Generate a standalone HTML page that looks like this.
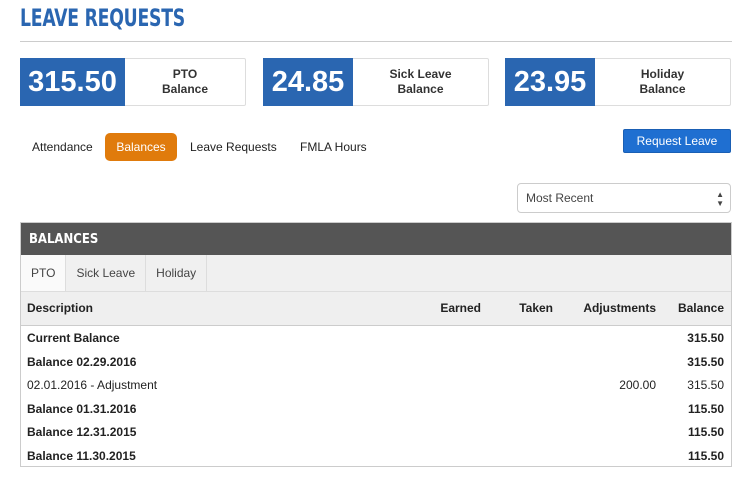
<!DOCTYPE html>
<html><head><style>
*{box-sizing:border-box;margin:0;padding:0}
body{width:742px;height:483px;background:#fff;font-family:"Liberation Sans",sans-serif;color:#222;position:relative;overflow:hidden}
.abs{position:absolute}
h1{position:absolute;left:20px;top:4px;font-family:"DejaVu Sans Condensed","Liberation Sans Narrow","Liberation Sans",sans-serif;font-weight:bold;font-size:24px;color:#2a66b1;letter-spacing:-0.3px;transform:scaleX(.8);transform-origin:left;white-space:nowrap}
.hr{left:20px;top:41px;width:712px;height:1px;background:#ccc}
.card{position:absolute;top:58px;height:48px;border:1px solid #ddd;border-radius:2px;display:flex;background:#fff}
.card .n{background:#2a66b1;color:#fff;font-size:29px;font-weight:bold;display:flex;align-items:center;justify-content:center;margin:-1px 0 0 -1px;height:48px}
.card .l{flex:1;display:flex;align-items:center;justify-content:center;text-align:center;font-weight:bold;font-size:12px;line-height:15px;color:#333}
.tab{position:absolute;top:133px;height:28px;line-height:28px;font-size:12px;color:#222}
.btn{left:623px;top:129px;width:108px;height:24px;background:#1f6fd1;border:1px solid #1a5fb4;color:#fff;font-size:12px;text-align:center;line-height:22px;border-radius:2px}
.sel{left:517px;top:183px;width:214px;height:30px;border:1px solid #ccc;border-radius:4px;font-size:12px;line-height:28px;padding-left:8px;color:#444}
.panel{left:20px;top:222px;width:712px;height:245px;border:1px solid #ccc}
.ph{height:32px;background:#555;color:#fff;font-family:"DejaVu Sans Condensed","Liberation Sans",sans-serif;font-weight:bold;font-size:13px;line-height:34px;padding-left:8px}
.tabs{height:37px;background:#f0f0f0;border-bottom:1px solid #ddd;display:flex}
.tabs div{padding:0 10px;line-height:37px;font-size:12px;color:#444;border-right:1px solid #ddd}
.th{height:34px;background:#efefef;border-bottom:1px solid #ccc;font-size:12px;font-weight:bold;position:relative}
.row{height:23.5px;font-size:12px;position:relative}
.c{position:absolute;top:0}
.th .c{line-height:33px}.row .c{line-height:23.5px}
.b{font-weight:bold}
</style></head><body>
<h1>LEAVE REQUESTS</h1>
<div class="abs hr"></div>
<div class="card" style="left:20px;width:226px"><div class="n" style="width:105px">315.50</div><div class="l">PTO<br>Balance</div></div>
<div class="card" style="left:263px;width:226px"><div class="n" style="width:90px">24.85</div><div class="l">Sick Leave<br>Balance</div></div>
<div class="card" style="left:505px;width:226px"><div class="n" style="width:90px">23.95</div><div class="l">Holiday<br>Balance</div></div>
<div class="tab" style="left:32px">Attendance</div>
<div class="tab" style="left:105px;width:72px;background:#e07b0c;color:#fff;border-radius:5px;text-align:center">Balances</div>
<div class="tab" style="left:190px">Leave Requests</div>
<div class="tab" style="left:300px">FMLA Hours</div>
<div class="abs btn">Request Leave</div>
<div class="abs sel">Most Recent<span style="position:absolute;right:6px;font-size:8px;line-height:9px;top:6px">▲<br>▼</span></div>
<div class="abs panel">
<div class="ph">BALANCES</div>
<div class="tabs"><div style="background:#fafafa">PTO</div><div>Sick Leave</div><div>Holiday</div></div>
<div class="th"><span class="c" style="left:6px">Description</span><span class="c" style="right:250px">Earned</span><span class="c" style="right:178px">Taken</span><span class="c" style="right:75px">Adjustments</span><span class="c" style="right:7px">Balance</span></div>
<div style="height:1px"></div>
<div class="row b"><span class="c" style="left:6px">Current Balance</span><span class="c" style="right:7px">315.50</span></div>
<div class="row b"><span class="c" style="left:6px">Balance 02.29.2016</span><span class="c" style="right:7px">315.50</span></div>
<div class="row"><span class="c" style="left:6px">02.01.2016 - Adjustment</span><span class="c" style="right:75px">200.00</span><span class="c" style="right:7px">315.50</span></div>
<div class="row b"><span class="c" style="left:6px">Balance 01.31.2016</span><span class="c" style="right:7px">115.50</span></div>
<div class="row b"><span class="c" style="left:6px">Balance 12.31.2015</span><span class="c" style="right:7px">115.50</span></div>
<div class="row b"><span class="c" style="left:6px">Balance 11.30.2015</span><span class="c" style="right:7px">115.50</span></div>
</div>
</body></html>
